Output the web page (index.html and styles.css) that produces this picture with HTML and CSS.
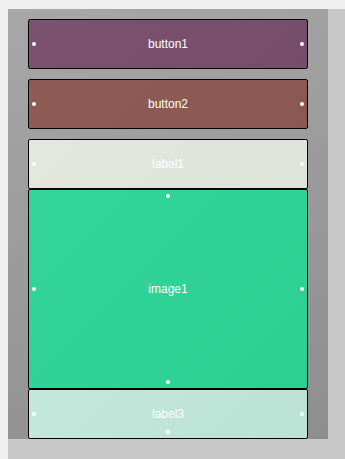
FILE: index.html
```html
<!doctype html>
<html lang="en">
<head>
    <meta charset="UTF-8">
    <meta name="viewport" content="width=device-width, initial-scale=1.0">
    <title>Layout Designer</title>
    <link rel="stylesheet" href="styles.css">
</head>
<body>
    <div class="stage">
        <div class="panel">
            <div class="widget button1">
                <span class="dot left"></span>
                <span class="caption">button1</span>
                <span class="dot right"></span>
            </div>
            <div class="widget button2">
                <span class="dot left"></span>
                <span class="caption">button2</span>
                <span class="dot right"></span>
            </div>
            <div class="widget label1">
                <span class="dot left"></span>
                <span class="caption">label1</span>
                <span class="dot right"></span>
            </div>
            <div class="widget image1">
                <span class="dot top"></span>
                <span class="dot left"></span>
                <span class="caption">image1</span>
                <span class="dot right"></span>
                <span class="dot bottom"></span>
            </div>
            <div class="widget label3">
                <span class="dot left"></span>
                <span class="caption">label3</span>
                <span class="dot right"></span>
                <span class="dot bottom"></span>
            </div>
        </div>
    </div>
</body>
</html>
```

FILE: styles.css
```css
body {
    margin: 0;
    background: #f0f0f0;
    font-family: "Liberation Sans", Arial, sans-serif;
    height: 459px;
    overflow: hidden;
}
.stage {
    margin: 9px 0 0 8px;
    height: 450px;
    background: #c8c8c8;
}
.panel {
    width: 280px;
    height: 410px;
    padding: 10px 20px;
    background: linear-gradient(160deg, #a7a7a7, #8e8e8e);
    display: flex;
    flex-direction: column;
}
.widget {
    position: relative;
    box-sizing: border-box;
    height: 50px;
    border: 1px solid #000;
    border-radius: 2px;
    display: flex;
    justify-content: center;
    align-items: center;
    flex-shrink: 0;
}
.caption {
    color: #fff;
    font-size: 12px;
}
.button1 {
    margin-bottom: 10px;
    background: linear-gradient(135deg, #7b5270, #764c6b);
}
.button2 {
    margin-bottom: 10px;
    background: linear-gradient(135deg, #8e5c54, #895850);
}
.label1 {
    background: linear-gradient(135deg, #e3e7de, #dde4d9);
}
.image1 {
    height: 200px;
    background: linear-gradient(135deg, #33d49a, #2dd093);
}
.label3 {
    background: linear-gradient(135deg, #c4e7dc, #bbe2d4);
}
.dot {
    position: absolute;
    width: 4px;
    height: 4px;
    border-radius: 50%;
    background: #fff;
}
.dot.left {
    left: 3px;
    top: calc(50% - 2px);
}
.dot.right {
    right: 3px;
    top: calc(50% - 2px);
}
.dot.top {
    top: 4px;
    left: calc(50% - 2px);
}
.dot.bottom {
    bottom: 4px;
    left: calc(50% - 2px);
}
```
